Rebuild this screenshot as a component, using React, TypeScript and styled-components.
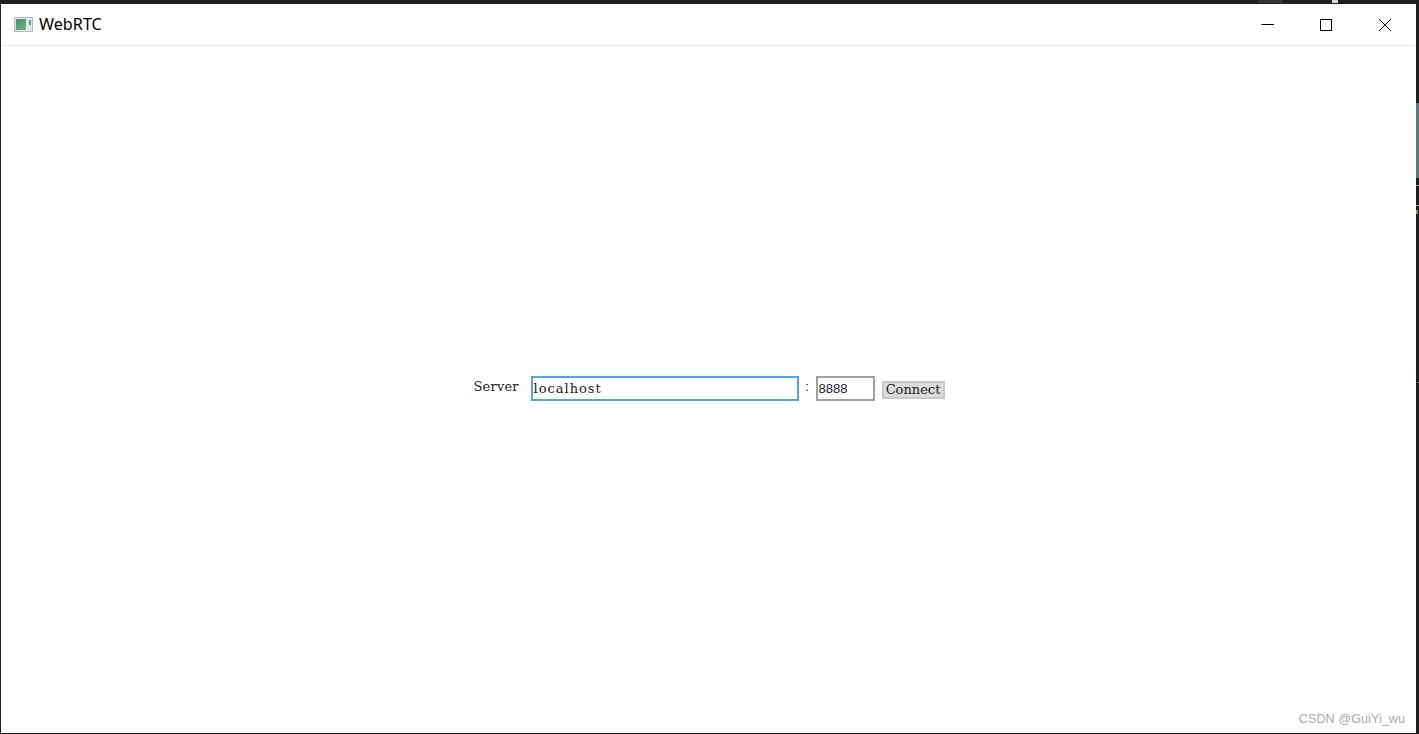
import React from "react";
import styled, { createGlobalStyle } from "styled-components";

const Global = createGlobalStyle`
  html, body, #root { margin: 0; padding: 0; height: 100%; overflow: hidden; }
  body {
    background:
      linear-gradient(#d8d8d8, #d8d8d8) 1332px 0 / 6px 3px no-repeat,
      linear-gradient(#333333, #333333) 1258px 0 / 25px 3px no-repeat,
      linear-gradient(#567682, #567682) 1416px 103px / 3px 75px no-repeat,
      linear-gradient(#a89684, #a89684) 1416px 185px / 3px 1px no-repeat,
      linear-gradient(#a8a8a8, #a8a8a8) 1416px 205px / 3px 1px no-repeat,
      linear-gradient(#b08050, #b08050) 1416px 210px / 2px 4px no-repeat,
      linear-gradient(#2f80d0, #2f80d0) 1417px 382px / 2px 1px no-repeat,
      #1f1f1f;
  }
`;

const Desktop = styled.div`
  box-sizing: border-box;
  width: 1419px;
  height: 734px;
  padding: 4px 3px 1px 1px;
  display: flex;
`;

const Window = styled.div`
  flex: 1;
  position: relative;
  background: #ffffff;
  display: flex;
  flex-direction: column;
`;

const TitleBar = styled.div`
  height: 41px;
  flex: none;
  margin-right: 1px;
  border-bottom: 1px solid #e9e9e9;
  display: flex;
  align-items: center;
  padding-left: 13px;
`;

const AppIcon = styled.svg`
  width: 19px;
  height: 15px;
  margin-right: 6px;
  flex: none;
`;

const Title = styled.span`
  font: 16.2px "Noto Sans", "Open Sans", sans-serif;
  color: #000000;
  line-height: 20px;
  position: relative;
  top: -1px;
`;

const Controls = styled.div`
  margin-left: auto;
  display: flex;
  height: 100%;
  padding-right: 1px;
`;

const ControlButton = styled.div`
  width: 58.5px;
  display: flex;
  align-items: center;
  justify-content: center;
`;

const ControlIcon = styled.svg`
  width: 14px;
  height: 14px;
`;

const Content = styled.div`
  flex: 1;
  display: flex;
  align-items: center;
  justify-content: center;
  padding: 0 0 2px 1px;
`;

const Form = styled.div`
  display: flex;
  align-items: center;
  font: 13px "DejaVu Serif", serif;
  color: #1a1a1a;
`;

const Label = styled.span`
  width: 45px;
  margin-right: 12px;
  position: relative;
  top: -2px;
  letter-spacing: 0.2px;
  white-space: nowrap;
`;

const Colon = styled.span`
  width: 17px;
  text-align: center;
  position: relative;
  top: -2px;
  font-family: "Liberation Sans", sans-serif;
`;

const Field = styled.div<{ $width: number; $focused?: boolean; $sans?: boolean }>`
  box-sizing: border-box;
  width: ${(p) => p.$width}px;
  height: 25px;
  border: ${(p) => (p.$focused ? "2px solid #52a5e3" : "2px solid #a0a0a0")};
  padding-left: 1px;
  display: flex;
  align-items: center;
  font: ${(p) => (p.$sans ? '13px "Liberation Sans", sans-serif' : '13px "DejaVu Serif", serif')};
  letter-spacing: ${(p) => (p.$sans ? "0" : "1px")};
  color: #1a1a1a;
`;

const ConnectButton = styled.div`
  box-sizing: border-box;
  width: 63px;
  height: 18px;
  margin-left: 7px;
  position: relative;
  top: 1px;
  background: #dcdcdc;
  border: 2px solid #c9c9c9;
  display: flex;
  align-items: center;
  justify-content: center;
  font: 13px "DejaVu Serif", serif;
  color: #1a1a1a;
`;

const Watermark = styled.span`
  position: absolute;
  right: 11px;
  bottom: 7px;
  font: 12.7px "Liberation Sans", sans-serif;
  color: #a9a9a9;
`;

export default function App() {
  return (
    <>
      <Global />
      <Desktop>
        <Window>
          <TitleBar>
            <AppIcon viewBox="0 0 19 15">
              <defs>
                <linearGradient id="pane" x1="0" y1="0" x2="0.6" y2="1">
                  <stop offset="0" stopColor="#3f8f8a" />
                  <stop offset="1" stopColor="#6fae6a" />
                </linearGradient>
              </defs>
              <rect x="0.5" y="0.5" width="18" height="14" fill="#e4e7ee" stroke="#b4b8c6" />
              <rect x="2" y="2" width="10" height="11" fill="url(#pane)" />
              <rect x="15" y="3" width="2" height="5" fill="#5a9aa0" />
            </AppIcon>
            <Title>WebRTC</Title>
            <Controls>
              <ControlButton>
                <ControlIcon viewBox="0 0 14 14">
                  <path d="M0.5 6.5H13" stroke="#000" strokeWidth="1" fill="none" />
                </ControlIcon>
              </ControlButton>
              <ControlButton>
                <ControlIcon viewBox="0 0 14 14">
                  <rect x="1.5" y="1.5" width="11" height="11" stroke="#000" strokeWidth="1" fill="none" />
                </ControlIcon>
              </ControlButton>
              <ControlButton>
                <ControlIcon viewBox="0 0 14 14">
                  <path d="M1 1L13 13M13 1L1 13" stroke="#000" strokeWidth="1" fill="none" />
                </ControlIcon>
              </ControlButton>
            </Controls>
          </TitleBar>
          <Content>
            <Form>
              <Label>Server</Label>
              <Field $width={268} $focused>localhost</Field>
              <Colon>:</Colon>
              <Field $width={59} $sans>8888</Field>
              <ConnectButton>Connect</ConnectButton>
            </Form>
          </Content>
          <Watermark>CSDN @GuiYi_wu</Watermark>
        </Window>
      </Desktop>
    </>
  );
}
